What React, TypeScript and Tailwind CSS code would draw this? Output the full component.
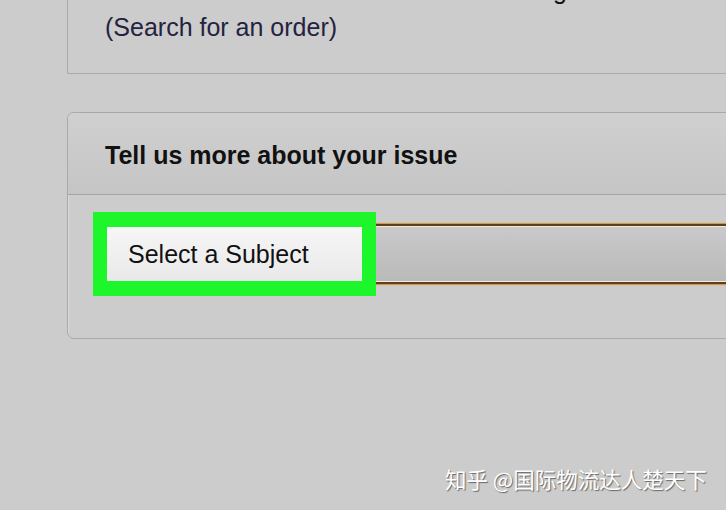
export default function App() {
  return (
    <div
      className="relative w-[726px] h-[510px] overflow-hidden bg-[#cccccc]"
      style={{ fontFamily: '"Liberation Sans", Arial, sans-serif' }}
    >
      <div className="ml-[67px] w-[720px] h-[74px] flex flex-col border-l border-b border-[#a9a9a9] pl-[37px]">
        <div className="-mt-[25px] flex flex-col">
          <div className="text-[25px] leading-[30px] h-[30px] text-[#111111] whitespace-nowrap tracking-[0.6px]">
            Enter the order number below if nothing
          </div>
          <div className="mt-[7px] text-[25px] leading-[30px] h-[30px] text-[#23233f] whitespace-nowrap">
            (Search for an order)
          </div>
        </div>
      </div>

      <div className="ml-[67px] mt-[38px] w-[720px] h-[227px] rounded-[7px] border border-[#a9a9a9] shadow-[inset_1px_1px_0_#dadada] overflow-hidden">
        <div className="h-[82px] border-b border-[#a6a6a6] bg-gradient-to-b from-[#d0d0d0] to-[#c5c5c5] flex items-center pl-[37px] pt-[3px]">
          <span className="text-[25px] leading-[30px] font-bold text-[#111111]">Tell us more about your issue</span>
        </div>
        <div className="flex items-center pl-[25px] pt-[17px]">
          <div className="w-[283px] h-[84px] bg-[#1ef62c] flex items-center justify-center shrink-0 relative z-10">
            <div className="w-[255px] h-[54px] bg-gradient-to-b from-[#f6f6f6] to-[#e9e9ea] flex items-center pl-[21px]">
              <span className="text-[25px] leading-[30px] text-[#111111]">Select a Subject</span>
            </div>
          </div>
          <div className="flex-1 h-[64px] flex flex-col">
            <div className="h-[1px] bg-[#d8c4a0]" />
            <div className="h-[1px] bg-[#c39a64]" />
            <div className="h-[2px] bg-[#5e3f1a]" />
            <div className="flex-1 bg-gradient-to-b from-[#c9c9cb] to-[#bababa] border-t border-b border-[#f2ebe4]" />
            <div className="h-[2px] bg-[#5e3f1a]" />
            <div className="h-[1px] bg-[#c39a64]" />
            <div className="h-[1px] bg-[#d8c4a0]" />
          </div>
        </div>
      </div>

      <div
        className="absolute left-[445px] top-[467px] text-[21.5px] leading-[24px] text-white whitespace-nowrap"
        style={{
          fontFamily: '"Noto Sans CJK SC", sans-serif',
          textShadow: '1px 1px 1px rgba(60,60,60,0.7)',
        }}
      >
        知乎 @国际物流达人楚天下
      </div>
    </div>
  );
}
